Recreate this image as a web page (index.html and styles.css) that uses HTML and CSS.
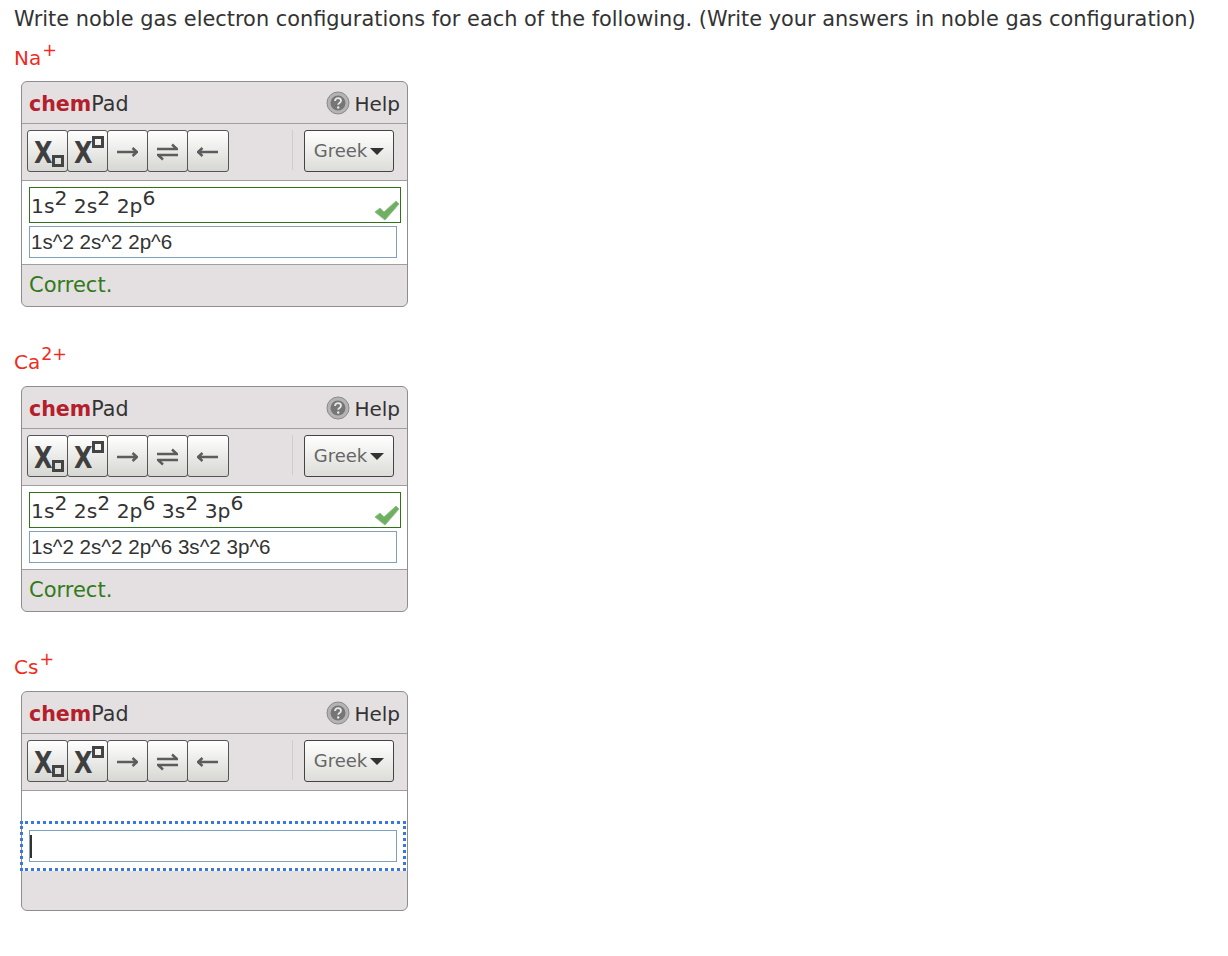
FILE: index.html
```html
<!DOCTYPE html>
<html lang="en">
<head>
<meta charset="utf-8">
<title>chemPad</title>
<link rel="stylesheet" href="styles.css">
</head>
<body>
<p class="question">Write noble gas electron configurations for each of the following. (Write your answers in noble gas configuration)</p>

<p class="species species-first">Na<sup>+</sup></p>
<section class="pad">
  <header class="pad-head"><span class="brand"><b>chem</b>Pad</span><span class="help"><svg class="help-icon" viewBox="0 0 24 24"><circle cx="12" cy="12" r="11" fill="#b4b4b4" stroke="#8a8a8a"/><circle cx="12" cy="12" r="7.500" fill="#767676"/><path d="M9 10c.2-1.800 1.400-2.800 3-2.800 1.700 0 3 1 3 2.500 0 2.300-2.800 2.200-2.800 4" fill="none" stroke="#e8e8e8" stroke-width="1.800"/><circle cx="12.200" cy="16.500" r="1.200" fill="#e8e8e8"/></svg>Help</span></header>
  <div class="toolbar">
    <div class="tools">
      <button class="tool"><span class="x">X</span><i class="box box-sub"></i></button>
      <button class="tool"><span class="x">X</span><i class="box box-sup"></i></button>
      <button class="tool"><svg class="arrow" viewBox="0 0 21 14"><path d="M0 7h19.500M15.500 3 20 7l-4.500 4" /></svg></button>
      <button class="tool"><svg class="arrow arrow-eq" viewBox="0 0 21 18"><path d="M0 6h20L15 1.500M21 12H1l5 4.500" /></svg></button>
      <button class="tool"><svg class="arrow" viewBox="0 0 21 14"><path d="M21 7H1.500M5.500 3 1 7l4.500 4" /></svg></button>
    </div>
    <div class="sep"></div>
    <button class="greek">Greek<i class="caret"></i></button>
  </div>
  <div class="pad-body">
    <div class="render">1s<sup>2</sup> 2s<sup>2</sup> 2p<sup>6</sup><svg class="check" viewBox="0 0 26 22"><path d="M1 12l5-4 4 4L22 1l3 3-14 16z" fill="#6fae63" stroke="#8cc484"/></svg></div>
    <div class="entry">1s^2 2s^2 2p^6</div>
  </div>
  <footer class="pad-foot">Correct.</footer>
</section>

<p class="species">Ca<sup>2+</sup></p>
<section class="pad">
  <header class="pad-head"><span class="brand"><b>chem</b>Pad</span><span class="help"><svg class="help-icon" viewBox="0 0 24 24"><circle cx="12" cy="12" r="11" fill="#b4b4b4" stroke="#8a8a8a"/><circle cx="12" cy="12" r="7.500" fill="#767676"/><path d="M9 10c.2-1.800 1.400-2.800 3-2.800 1.700 0 3 1 3 2.500 0 2.300-2.800 2.200-2.800 4" fill="none" stroke="#e8e8e8" stroke-width="1.800"/><circle cx="12.200" cy="16.500" r="1.200" fill="#e8e8e8"/></svg>Help</span></header>
  <div class="toolbar">
    <div class="tools">
      <button class="tool"><span class="x">X</span><i class="box box-sub"></i></button>
      <button class="tool"><span class="x">X</span><i class="box box-sup"></i></button>
      <button class="tool"><svg class="arrow" viewBox="0 0 21 14"><path d="M0 7h19.500M15.500 3 20 7l-4.500 4" /></svg></button>
      <button class="tool"><svg class="arrow arrow-eq" viewBox="0 0 21 18"><path d="M0 6h20L15 1.500M21 12H1l5 4.500" /></svg></button>
      <button class="tool"><svg class="arrow" viewBox="0 0 21 14"><path d="M21 7H1.500M5.500 3 1 7l4.500 4" /></svg></button>
    </div>
    <div class="sep"></div>
    <button class="greek">Greek<i class="caret"></i></button>
  </div>
  <div class="pad-body">
    <div class="render">1s<sup>2</sup> 2s<sup>2</sup> 2p<sup>6</sup> 3s<sup>2</sup> 3p<sup>6</sup><svg class="check" viewBox="0 0 26 22"><path d="M1 12l5-4 4 4L22 1l3 3-14 16z" fill="#6fae63" stroke="#8cc484"/></svg></div>
    <div class="entry">1s^2 2s^2 2p^6 3s^2 3p^6</div>
  </div>
  <footer class="pad-foot">Correct.</footer>
</section>

<p class="species">Cs<sup>+</sup></p>
<section class="pad">
  <header class="pad-head"><span class="brand"><b>chem</b>Pad</span><span class="help"><svg class="help-icon" viewBox="0 0 24 24"><circle cx="12" cy="12" r="11" fill="#b4b4b4" stroke="#8a8a8a"/><circle cx="12" cy="12" r="7.500" fill="#767676"/><path d="M9 10c.2-1.800 1.400-2.800 3-2.800 1.700 0 3 1 3 2.500 0 2.300-2.800 2.200-2.800 4" fill="none" stroke="#e8e8e8" stroke-width="1.800"/><circle cx="12.200" cy="16.500" r="1.200" fill="#e8e8e8"/></svg>Help</span></header>
  <div class="toolbar">
    <div class="tools">
      <button class="tool"><span class="x">X</span><i class="box box-sub"></i></button>
      <button class="tool"><span class="x">X</span><i class="box box-sup"></i></button>
      <button class="tool"><svg class="arrow" viewBox="0 0 21 14"><path d="M0 7h19.500M15.500 3 20 7l-4.500 4" /></svg></button>
      <button class="tool"><svg class="arrow arrow-eq" viewBox="0 0 21 18"><path d="M0 6h20L15 1.500M21 12H1l5 4.500" /></svg></button>
      <button class="tool"><svg class="arrow" viewBox="0 0 21 14"><path d="M21 7H1.500M5.500 3 1 7l4.500 4" /></svg></button>
    </div>
    <div class="sep"></div>
    <button class="greek">Greek<i class="caret"></i></button>
  </div>
  <div class="pad-body pad-body-empty">
    <div class="focus">
      <div class="entry entry-focus"><i class="cursor"></i></div>
    </div>
  </div>
  <footer class="pad-foot pad-foot-empty"></footer>
</section>
</body>
</html>
```

FILE: styles.css
```css
* { box-sizing: border-box; }
html, body { margin: 0; background: #fff; }
body {
  width: 1228px;
  height: 956px;
  overflow: hidden;
  padding: 7px 0 0 14px;
  font-family: "DejaVu Sans", Verdana, sans-serif;
  color: #333;
}
.question {
  margin: 0;
  font-size: 20.880px;
  line-height: 24px;
  white-space: nowrap;
}
.species {
  margin: 0 0 9px;
  height: 34px;
  padding-top: 4px;
  font-size: 20px;
  line-height: 30px;
  color: #f02c1e;
}
.species-first { margin: 12px 0 7px; height: 31px; padding-top: 0; }
.species sup { font-size: 17.500px; line-height: 0; vertical-align: 9px; margin-left: 1px; }
.pad {
  width: 387px;
  margin: 0 0 36px 7px;
  border: 1px solid #8e8e8e;
  border-radius: 6px;
  background: #e4e0e1;
}
.pad-head {
  height: 42px;
  padding: 3px 7px 0;
  display: flex;
  align-items: center;
  justify-content: space-between;
  font-size: 20.600px;
  border-bottom: 1px solid #a09e9e;
}
.brand b { color: #b3202c; }
.help { display: flex; align-items: center; gap: 4px; font-size: 20px; }
.help-icon { width: 24px; height: 24px; margin-top: -3px; }
.toolbar {
  height: 57px;
  padding: 6px 13px 0 5px;
  display: flex;
  align-items: flex-start;
  border-bottom: 1px solid #a09e9e;
}
.tools { display: flex; }
.tool {
  width: 40.500px;
  height: 42px;
  padding: 0;
  position: relative;
  display: flex;
  align-items: center;
  justify-content: center;
  border: 1px solid #555;
  margin-right: -.500px;
  border-radius: 3px;
  background: linear-gradient(#fff, #d6d6d2);
}
.tool:last-child { width: 41.500px; margin-right: 0; }
.x {
  position: absolute;
  left: 6px;
  top: 5px;
  font: bold 30px/34px "DejaVu Sans", sans-serif;
  color: #3f3f3f;
  transform: scaleX(.8);
  transform-origin: left;
}
.box { position: absolute; width: 12px; height: 12px; border: 3px solid #444; }
.box-sub { right: 3px; bottom: 4px; }
.box-sup { right: 3px; top: 5px; }
.arrow { width: 21px; height: 14px; fill: none; stroke: #5c5c5c; stroke-width: 2.400; margin-top: 1px; }
.arrow-eq { height: 18px; }
.sep { width: 1px; height: 40px; margin-left: 63.500px; background: #cfcccc; }
.greek {
  width: 90px;
  height: 42px;
  margin-left: 11px;
  padding: 0 0 1px 0;
  display: flex;
  align-items: center;
  justify-content: center;
  gap: 3px;
  border: 1px solid #444;
  border-radius: 3px;
  background: linear-gradient(#fff, #dcdcd8);
  font: 18px "DejaVu Sans", sans-serif;
  color: #666;
}
.caret {
  width: 0;
  height: 0;
  margin-top: 2px;
  border-left: 7px solid transparent;
  border-right: 7px solid transparent;
  border-top: 7px solid #333;
}
.pad-body {
  height: 84px;
  padding: 6px 6px 0 7px;
  background: #fff;
  border-bottom: 1px solid #a09e9e;
}
.render {
  position: relative;
  height: 36px;
  padding: 1px 0 0 1px;
  border: 1px solid #327219;
  font-size: 20.300px;
  line-height: 34px;
  white-space: pre-wrap;
}
.render sup { font-size: 20.300px; line-height: 0; vertical-align: 8px; }
.check { position: absolute; right: 0; bottom: 0; width: 26px; height: 22px; }
.entry {
  width: 368px;
  height: 32px;
  margin-top: 3px;
  padding-left: 1px;
  border: 1px solid #80a0bf;
  background: #fff;
  font: 20.600px/30px "Liberation Sans", Arial, sans-serif;
}
.pad-foot {
  height: 41px;
  padding-left: 7px;
  font-size: 21px;
  line-height: 41px;
  color: #327a1a;
  border-radius: 0 0 6px 6px;
}
.pad-body-empty {
  height: 80px;
  padding: 30px 0 0;
  border-bottom: 0;
}
.focus {
  height: 50px;
  margin-left: -2px;
  width: 386px;
  border: 3px dotted #3a78e0;
  padding: 6px 0 0 6px;
}
.entry-focus { margin-top: 0; padding-left: 0; display: flex; align-items: center; }
.cursor { width: 2px; height: 23px; background: #333; }
.pad-foot-empty { height: 39px; }
```
